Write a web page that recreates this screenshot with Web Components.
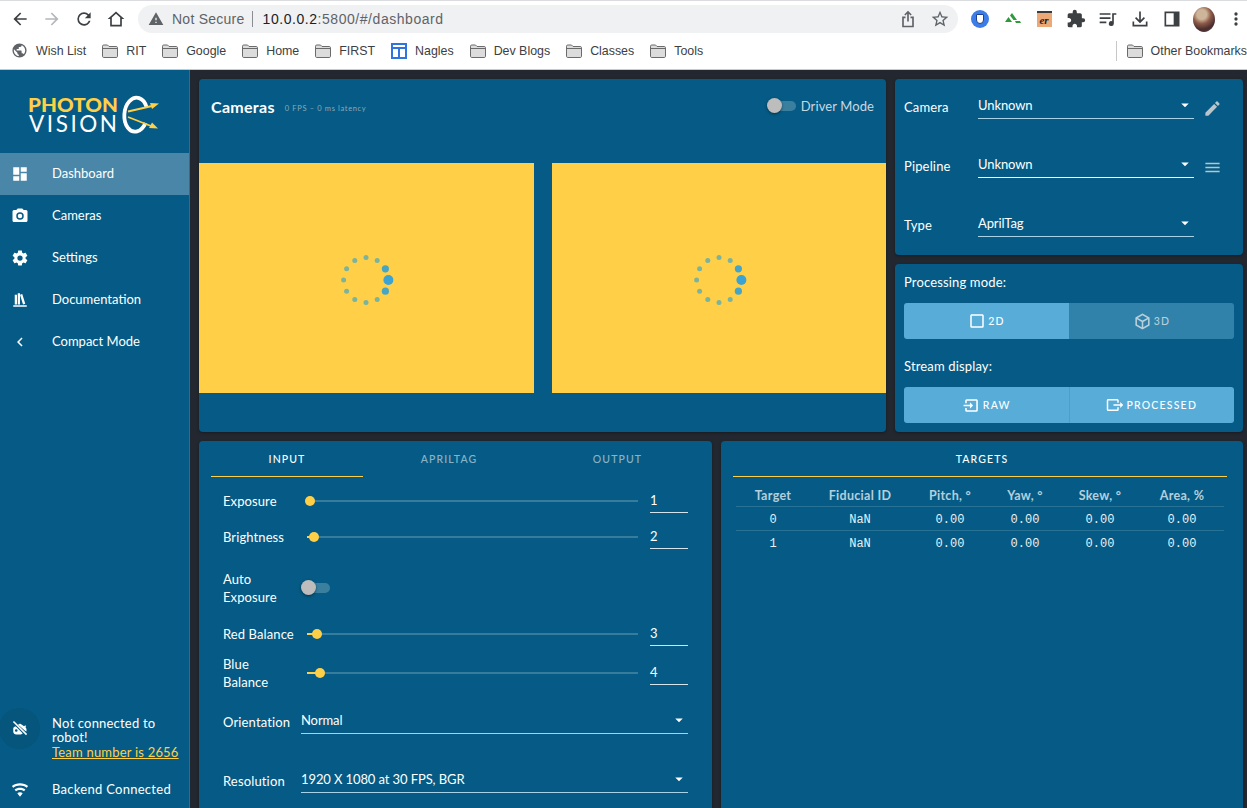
<!DOCTYPE html>
<html>
<head>
<meta charset="utf-8">
<title>Photon Vision</title>
<style>
  html, body { margin: 0; height: 100%; overflow: hidden; background: #232830; }
  body { font-family: Lato, "Noto Sans", sans-serif; color: #fff; display: flex; flex-direction: column; height: 808px; }
</style>
</head>
<body>
<pv-browser></pv-browser>
<pv-app>
  <pv-sidebar slot="side"></pv-sidebar>
  <pv-camera-card></pv-camera-card>
  <pv-picker-card></pv-picker-card>
  <pv-mode-card></pv-mode-card>
  <pv-input-card></pv-input-card>
  <pv-targets-card></pv-targets-card>
</pv-app>

<script>
const Colors = {
  card: '#055b85',
  page: '#232830',
  yellow: '#ffd047',
  active: '#58acd8',
  inactive: '#3182aa',
};
const Paths = {
  dashboard: 'M13,3V9H21V3M13,21H21V11H13M3,21H11V15H3M3,13H11V3H3V13Z',
  camera: 'M4,4H7L9,2H15L17,4H20A2,2 0 0,1 22,6V18A2,2 0 0,1 20,20H4A2,2 0 0,1 2,18V6A2,2 0 0,1 4,4M12,7A5,5 0 0,0 7,12A5,5 0 0,0 12,17A5,5 0 0,0 17,12A5,5 0 0,0 12,7M12,9A3,3 0 0,1 15,12A3,3 0 0,1 12,15A3,3 0 0,1 9,12A3,3 0 0,1 12,9Z',
  cog: 'M12,15.5A3.5,3.5 0 0,1 8.5,12A3.5,3.5 0 0,1 12,8.5A3.5,3.5 0 0,1 15.5,12A3.5,3.5 0 0,1 12,15.5M19.43,12.97C19.47,12.65 19.5,12.33 19.5,12C19.5,11.67 19.47,11.34 19.43,11L21.54,9.37C21.73,9.22 21.78,8.95 21.66,8.73L19.66,5.27C19.54,5.05 19.27,4.96 19.05,5.05L16.56,6.05C16.04,5.66 15.5,5.32 14.87,5.07L14.5,2.42C14.46,2.18 14.25,2 14,2H10C9.75,2 9.54,2.18 9.5,2.42L9.13,5.07C8.5,5.32 7.96,5.66 7.44,6.05L4.95,5.05C4.73,4.96 4.46,5.05 4.34,5.27L2.34,8.73C2.21,8.95 2.27,9.22 2.46,9.37L4.57,11C4.53,11.34 4.5,11.67 4.5,12C4.5,12.33 4.53,12.65 4.57,12.97L2.46,14.63C2.27,14.78 2.21,15.05 2.34,15.27L4.34,18.73C4.46,18.95 4.73,19.03 4.95,18.95L7.44,17.94C7.96,18.34 8.5,18.68 9.13,18.93L9.5,21.58C9.54,21.82 9.75,22 10,22H14C14.25,22 14.46,21.82 14.5,21.58L14.87,18.93C15.5,18.67 16.04,18.34 16.56,17.94L19.05,18.95C19.27,19.03 19.54,18.95 19.66,18.73L21.66,15.27C21.78,15.05 21.73,14.78 21.54,14.63L19.43,12.97Z',
  bookshelf: 'M9 3V18H12V3H9M12 5L16 18L19 17L15 4L12 5M5 5V18H8V5H5M3 19V21H21V19H3Z',
  chevron: 'M15.41,16.58L10.83,12L15.41,7.41L14,6L8,12L14,18L15.41,16.58Z',
  wifi: 'M12,21L15.6,16.2C14.6,15.45 13.35,15 12,15C10.65,15 9.4,15.45 8.4,16.2L12,21M12,3C7.95,3 4.21,4.34 1.2,6.6L3,9C5.5,7.12 8.62,6 12,6C15.38,6 18.5,7.12 21,9L22.8,6.6C19.79,4.34 16.05,3 12,3M12,9C9.3,9 6.81,9.89 4.8,11.4L6.6,13.8C8.1,12.67 9.97,12 12,12C14.03,12 15.9,12.67 17.4,13.8L19.2,11.4C17.19,9.89 14.7,9 12,9Z',
  robotoff: 'M4 2.500L21.500 20L20 21.500L2.500 4ZM3 13C3 11 4.500 9.500 6.500 10L15.500 19C15 19.800 14.300 20.500 13 20.500H7C4.800 20.500 3 19 3 16.500ZM7 13.500A1.800 1.800 0 1 0 7 17.100A1.800 1.800 0 1 0 7 13.500ZM9.500 7.500C10.500 6.300 12 6 13 6.500L17.500 9.500L19 8.200L20.300 9.500L19 10.800C20.500 12 21 14 20.500 16.500L18.800 15.800Z',
  pencil: 'M20.71,7.04C21.1,6.65 21.1,6 20.71,5.63L18.37,3.29C18,2.9 17.35,2.9 16.96,3.29L15.12,5.12L18.87,8.87M3,17.25V21H6.75L17.81,9.93L14.06,6.18L3,17.25Z',
  menu: 'M3,6H21V8H3V6M3,11H21V13H3V11M3,16H21V18H3V16Z',
  caret: 'M7,10L12,15L17,10H7Z',
  cube: 'M21,16.5C21,16.88 20.79,17.21 20.47,17.38L12.57,21.82C12.41,21.94 12.21,22 12,22C11.79,22 11.59,21.94 11.43,21.82L3.53,17.38C3.21,17.21 3,16.88 3,16.5V7.5C3,7.12 3.21,6.79 3.53,6.62L11.43,2.18C11.59,2.06 11.79,2 12,2C12.21,2 12.41,2.06 12.57,2.18L20.47,6.62C20.79,6.79 21,7.12 21,7.5V16.5M12,4.15L6.04,7.5L12,10.85L17.96,7.5L12,4.15M5,15.91L11,19.29V12.58L5,9.21V15.91M19,15.91V9.21L13,12.58V19.29L19,15.91Z',
  square: 'M19,3H5C3.89,3 3,3.89 3,5V19A2,2 0 0,0 5,21H19A2,2 0 0,0 21,19V5C21,3.89 20.1,3 19,3M19,5V19H5V5H19Z',
  import: 'M14,12L10,8V11H2V13H10V16M20,18V6C20,4.89 19.1,4 18,4H6A2,2 0 0,0 4,6V9H6V6H18V18H6V15H4V18A2,2 0 0,0 6,20H18A2,2 0 0,0 20,18Z',
  export: 'M23,12L19,8V11H10V13H19V16M1,18V6C1,4.89 1.9,4 3,4H15A2,2 0 0,1 17,6V9H15V6H3V18H15V15H17V18A2,2 0 0,1 15,20H3A2,2 0 0,1 1,18Z',
  back: 'M20,11V13H8L13.5,18.5L12.08,19.92L4.16,12L12.08,4.08L13.5,5.5L8,11H20Z',
  forward: 'M4,11V13H16L10.5,18.5L11.92,19.92L19.84,12L11.92,4.08L10.5,5.5L16,11H4Z',
  reload: 'M17.65,6.35C16.2,4.9 14.21,4 12,4A8,8 0 0,0 4,12A8,8 0 0,0 12,20C15.73,20 18.84,17.45 19.73,14H17.65C16.83,16.33 14.61,18 12,18A6,6 0 0,1 6,12A6,6 0 0,1 12,6C13.66,6 15.14,6.69 16.22,7.78L13,11H20V4L17.65,6.35Z',
  home: 'M12 3L2 12H5V21H19V12H22L12 3M12 5.8L17 10.3V19H7V10.3L12 5.8Z',
  alert: 'M13,14H11V10H13M13,18H11V16H13M1,21H23L12,2L1,21Z',
  star: 'M12,15.39L8.24,17.66L9.23,13.38L5.91,10.5L10.29,10.13L12,6.09L13.71,10.13L18.09,10.5L14.77,13.38L15.76,17.66M22,9.24L14.81,8.63L12,2L9.19,8.62L2,9.24L7.45,13.97L5.82,21L12,17.27L18.18,21L16.54,13.97L22,9.24Z',
  share: 'M12 2L7.5 6.5L8.9 7.9L11 5.8V15H13V5.8L15.1 7.9L16.5 6.5L12 2M5 9V22H19V9H15V11H17V20H7V11H9V9H5Z',
  puzzle: 'M20.5,11H19V7C19,5.89 18.1,5 17,5H13V3.5A2.5,2.5 0 0,0 10.5,1A2.5,2.5 0 0,0 8,3.5V5H4A2,2 0 0,0 2,7V10.8H3.5C5,10.8 6.2,12 6.2,13.5C6.2,15 5,16.2 3.5,16.2H2V20A2,2 0 0,0 4,22H7.8V20.5C7.8,19 9,17.8 10.5,17.8C12,17.8 13.2,19 13.2,20.5V22H17A2,2 0 0,0 19,20V16H20.5A2.5,2.5 0 0,0 23,13.5A2.5,2.5 0 0,0 20.5,11Z',
  queue: 'M2 5H15V7H2V5M2 10H15V12H2V10M2 15H10V17H2V15M17 5H22V7H19V17.5A3 3 0 1 1 17 14.7V5Z',
  download: 'M11 3H13V13.2L16.6 9.6L18 11L12 17L6 11L7.4 9.6L11 13.2V3M3 15H5V19H19V15H21V21H3V15Z',
  panel: 'M3 3H21V21H3V3M5 5V19H14V5H5Z',
  dots: 'M12,16A2,2 0 0,1 14,18A2,2 0 0,1 12,20A2,2 0 0,1 10,18A2,2 0 0,1 12,16M12,10A2,2 0 0,1 14,12A2,2 0 0,1 12,14A2,2 0 0,1 10,12A2,2 0 0,1 12,10M12,4A2,2 0 0,1 14,6A2,2 0 0,1 12,8A2,2 0 0,1 10,6A2,2 0 0,1 12,4Z',
  earth: 'M17.9,17.39C17.64,16.59 16.89,16 16,16H15V13A1,1 0 0,0 14,12H8V10H10A1,1 0 0,0 11,9V7H13A2,2 0 0,0 15,5V4.59C17.93,5.77 20,8.64 20,12C20,14.08 19.2,15.97 17.9,17.39M11,19.93C7.05,19.44 4,16.08 4,12C4,11.38 4.08,10.78 4.21,10.21L9,15V16A2,2 0 0,0 11,18M12,2A10,10 0 0,0 2,12A10,10 0 0,0 12,22A10,10 0 0,0 22,12A10,10 0 0,0 12,2Z',
};

class PvElement extends HTMLElement {
  constructor() {
    super();
    this.attachShadow({ mode: 'open' });
    this.shadowRoot.innerHTML = this.render();
  }
  render() { return ''; }
}

class PvIcon extends PvElement {
  render() {
    const size = this.getAttribute('size') || 24;
    const d = Paths[this.getAttribute('name')];
    return `<style>:host{display:inline-flex;flex:none;width:${size}px;height:${size}px;}svg{display:block;width:100%;height:100%;}</style>
      <svg viewBox="0 0 24 24"><path fill="currentColor" d="${d}"/></svg>`;
  }
}
customElements.define('pv-icon', PvIcon);

class PvFolder extends PvElement {
  render() {
    return `<style>:host{display:inline-flex;flex:none;width:16px;height:14px;}svg{display:block;}</style>
      <svg width="16" height="14" viewBox="0 0 16 14">
        <path d="M.5 2.2C.5 1.5 1 1 1.7 1H5.5L7 2.5H14.3C15 2.5 15.5 3 15.5 3.7V12.3C15.5 13 15 13.5 14.3 13.5H1.7C1 13.5 .5 13 .5 12.3Z" fill="#dcdcdc" stroke="#6b6b6b"/>
        <path d="M1 4.5H15" stroke="#6b6b6b"/>
      </svg>`;
  }
}
customElements.define('pv-folder', PvFolder);

class PvBookmark extends PvElement {
  render() {
    return `<style>
      :host{display:inline-flex;align-items:center;gap:8px;font:12.4px "Liberation Sans",sans-serif;color:#3c4043;white-space:nowrap;}
    </style><slot name="icon"><pv-folder></pv-folder></slot><slot></slot>`;
  }
}
customElements.define('pv-bookmark', PvBookmark);

class PvBrowser extends PvElement {
  render() {
    const tool = (name, color) => `<span class="tool" style="color:${color || '#5f6368'}"><pv-icon name="${name}" size="20"></pv-icon></span>`;
    return `<style>
      :host{display:block;flex:none;height:70px;background:#fff;box-sizing:border-box;border-top:1px solid #dadce0;border-bottom:1px solid #c9c9c9;overflow:hidden;font-family:"Liberation Sans",sans-serif;color:#202124;}
      .bar{display:flex;align-items:center;height:32px;padding:2px 0 0 4px;}
      .tool{display:flex;align-items:center;justify-content:center;flex:none;width:32px;height:28px;}
      .omni{flex:none;width:820px;height:28px;margin:0 6px;box-sizing:border-box;padding:0 8px 0 10px;border-radius:14px;background:#f0f1f3;display:flex;align-items:center;font-size:14px;}
      .warn{color:#5f6368;margin-right:8px;}
      .sec{color:#5f6368;letter-spacing:.25px;}
      .sep{width:1px;height:16px;background:#8a8d91;margin:0 10px 0 7px;}
      .url{letter-spacing:.55px;flex:1;}
      .url span{color:#5f6368;}
      .omni-right{display:flex;gap:12px;color:#5f6368;}
      .marks{display:flex;align-items:center;height:31px;padding-left:10px;gap:16px;}
      .globe{color:#5f6368;margin-left:1px;}
      .end{margin-left:auto;border-left:1px solid #c7c7c7;padding-left:10px;height:20px;display:flex;align-items:center;flex:none;}
      .shield{width:18px;height:18px;border-radius:50%;background:#3d7de8;display:flex;align-items:center;justify-content:center;}
      .shield i{width:6px;height:8px;background:#fff;border-radius:1px 1px 4px 4px;border:1.5px solid #1f3f90;display:block;}
      .er{width:15px;height:16px;background:#eda878;color:#222;font:italic bold 11px "Liberation Serif",serif;display:flex;align-items:center;justify-content:center;border-top:2px solid #3a3a3a;box-sizing:border-box;}
      .me{width:22px;height:25px;border-radius:50%;background:radial-gradient(circle at 40% 30%,#cdb59a 0 22%,#8d5a48 42%,#4a2c30 68%,#5d4a35);}
    </style>
    <div class="bar">
      ${tool('back', '#3c4043')}${tool('forward', '#b5b7ba')}${tool('reload', '#3c4043')}${tool('home', '#3c4043')}
      <div class="omni">
        <pv-icon class="warn" name="alert" size="16"></pv-icon>
        <span class="sec">Not Secure</span><i class="sep"></i>
        <span class="url">10.0.0.2<span>:5800/#/dashboard</span></span>
        <div class="omni-right"><pv-icon name="share" size="20"></pv-icon><pv-icon name="star" size="20"></pv-icon></div>
      </div>
      <span class="tool"><span class="shield"><i></i></span></span>
      <span class="tool" style="color:#2f9a3a"><svg width="18" height="14" viewBox="0 0 18 14"><path fill="currentColor" d="M9 1L14 8H10.5L7 3.5ZM5.5 5L9 10H2ZM12 9H17L18 11H13Z"/></svg></span>
      <span class="tool"><span class="er">er</span></span>
      ${tool('puzzle', '#3c4043')}${tool('queue', '#3c4043')}${tool('download', '#3c4043')}${tool('panel', '#3c4043')}
      <span class="tool"><span class="me"></span></span>
      ${tool('dots', '#3c4043')}
    </div>
    <div class="marks">
      <pv-bookmark><pv-icon class="globe" slot="icon" name="earth" size="17"></pv-icon>Wish List</pv-bookmark>
      <pv-bookmark>RIT</pv-bookmark>
      <pv-bookmark>Google</pv-bookmark>
      <pv-bookmark>Home</pv-bookmark>
      <pv-bookmark>FIRST</pv-bookmark>
      <pv-bookmark><svg slot="icon" width="16" height="16" viewBox="0 0 16 16"><path d="M1 1H15V15H1ZM1 5H15M8 5V15" fill="#fff" stroke="#2f74e0" stroke-width="2"/></svg>Nagles</pv-bookmark>
      <pv-bookmark>Dev Blogs</pv-bookmark>
      <pv-bookmark>Classes</pv-bookmark>
      <pv-bookmark>Tools</pv-bookmark>
      <div class="end"><pv-bookmark>Other Bookmarks</pv-bookmark></div>
    </div>`;
  }
}
customElements.define('pv-browser', PvBrowser);

class PvApp extends PvElement {
  render() {
    return `<style>
      :host{display:flex;flex:1;min-height:0;overflow:hidden;background:${Colors.page};}
      main{flex:1;min-width:0;padding:9px 4px 0 9px;display:grid;grid-template-columns:513px 174px 9px 348px;grid-template-rows:176px 168px 400px;gap:9px 0;}
      ::slotted(pv-camera-card){grid-column:1/3;grid-row:1/3;}
      ::slotted(pv-picker-card){grid-column:4;grid-row:1;}
      ::slotted(pv-mode-card){grid-column:4;grid-row:2;}
      ::slotted(pv-input-card){grid-column:1;grid-row:3;}
      ::slotted(pv-targets-card){grid-column:2/5;grid-row:3;margin-left:9px;}
    </style><slot name="side"></slot><main><slot></slot></main>`;
  }
}
customElements.define('pv-app', PvApp);

class PvNavItem extends PvElement {
  render() {
    return `<style>
      :host{display:flex;align-items:center;height:42px;font-size:13px;letter-spacing:var(--nav-spacing,0);color:#fff;}
      :host([active]){background:#4a86a8;}
      .ic{flex:none;width:38px;padding-left:1px;box-sizing:border-box;display:flex;justify-content:center;}
      .txt{margin-left:14px;padding-bottom:2px;}
    </style><span class="ic"><pv-icon name="${this.getAttribute('icon')}" size="18"></pv-icon></span><span class="txt"><slot></slot></span>`;
  }
}
customElements.define('pv-nav-item', PvNavItem);

class PvSidebar extends PvElement {
  render() {
    return `<style>
      :host{display:flex;flex-direction:column;flex:none;width:190px;box-sizing:border-box;background:${Colors.card};border-right:1px solid #2b6f92;}
      .logo{height:83px;flex:none;}
      .logo svg{display:block;}
      .grow{flex:1;}
      .robot{display:flex;align-items:flex-start;font-size:13px;letter-spacing:.2px;line-height:14.5px;padding-bottom:9px;}
      .avatar{flex:none;width:41px;height:41px;border-radius:50%;background:#05557c;display:flex;align-items:center;justify-content:center;margin:-8px 12px 0 -1px;}
      a{color:${Colors.yellow};text-decoration:underline;}
      .last{height:37px;padding-top:3px;--nav-spacing:.28px;}
    </style>
    <div class="logo">
      <svg width="189" height="83" viewBox="0 0 189 83">
        <text x="28" y="42" font-family="Lato,sans-serif" font-weight="900" font-size="19.5" fill="${Colors.yellow}" textLength="90" lengthAdjust="spacingAndGlyphs">PHOTON</text>
        <text x="29" y="62" font-family="Lato,sans-serif" font-weight="400" font-size="22.5" fill="#fff" textLength="88" lengthAdjust="spacing">VISION</text>
        <path d="M146.500 37A11.500 17 5 1 0 145.500 53" fill="none" stroke="#fff" stroke-width="3.8"/>
        <path d="M128 41.500L152 36" stroke="${Colors.yellow}" stroke-width="1.8"/>
        <path d="M159 33.500L150 33L152 39Z" fill="${Colors.yellow}"/>
        <path d="M128 47L151 56" stroke="${Colors.yellow}" stroke-width="1.8"/>
        <path d="M158 58.500L152 52.500L149 58Z" fill="${Colors.yellow}"/>
      </svg>
    </div>
    <pv-nav-item icon="dashboard" active>Dashboard</pv-nav-item>
    <pv-nav-item icon="camera">Cameras</pv-nav-item>
    <pv-nav-item icon="cog">Settings</pv-nav-item>
    <pv-nav-item icon="bookshelf">Documentation</pv-nav-item>
    <pv-nav-item icon="chevron">Compact Mode</pv-nav-item>
    <div class="grow"></div>
    <div class="robot">
      <span class="avatar"><pv-icon name="robotoff" size="18"></pv-icon></span>
      <span>Not connected to<br>robot!<br><a>Team number is 2656</a></span>
    </div>
    <pv-nav-item class="last" icon="wifi">Backend Connected</pv-nav-item>`;
  }
}
customElements.define('pv-sidebar', PvSidebar);

class PvCard extends PvElement {
  render() {
    return `<style>
      :host{display:block;background:${Colors.card};border-radius:4px;box-sizing:border-box;box-shadow:0 1px 3px rgba(0,0,0,.35);overflow:hidden;}
    </style><slot></slot>`;
  }
}
customElements.define('pv-card', PvCard);

class PvSwitch extends PvElement {
  render() {
    return `<style>
      :host{display:inline-block;position:relative;flex:none;width:29px;height:16px;}
      .track{position:absolute;left:1px;right:0;top:3px;height:10px;border-radius:5px;background:rgba(255,255,255,.22);}
      .thumb{position:absolute;left:0;top:0;width:15px;height:15px;border-radius:50%;background:#bdbdbd;box-shadow:0 1px 3px rgba(0,0,0,.45);}
    </style><div class="track"></div><div class="thumb"></div>`;
  }
}
customElements.define('pv-switch', PvSwitch);

class PvSpinner extends PvElement {
  render() {
    let dots = '';
    for (let i = 0; i < 12; i++) {
      const a = i * Math.PI / 6;
      const x = 30 + 22.4 * Math.cos(a);
      const y = 30 + 22.4 * Math.sin(a);
      const d = Math.min(i, 12 - i);
      const r = d === 0 ? 5 : d === 1 ? 3.6 : 2.5;
      const fill = d === 0 ? '#3ba2d4' : d === 1 ? '#46a5c4' : '#7bb39c';
      dots += `<circle cx="${x.toFixed(2)}" cy="${y.toFixed(2)}" r="${r}" fill="${fill}"/>`;
    }
    return `<style>:host{display:block;width:60px;height:60px;}svg{display:block;}</style><svg width="60" height="60">${dots}</svg>`;
  }
}
customElements.define('pv-spinner', PvSpinner);

class PvCameraCard extends PvElement {
  render() {
    return `<style>
      :host{display:block;}
      pv-card{height:100%;}
      header{display:flex;align-items:center;height:84px;box-sizing:border-box;padding:0 12px 29px;}
      h1{margin:0;font-size:16px;font-weight:700;letter-spacing:.3px;}
      small{font-size:7.5px;letter-spacing:.65px;color:#8ba9ba;margin-left:10px;margin-top:3px;}
      .drv{margin-left:auto;display:flex;align-items:center;gap:5px;font-size:13px;letter-spacing:.1px;color:#c8d8e2;padding-bottom:2px;}
      .feeds{display:flex;gap:18px;}
      .feed{flex:1;height:230px;box-sizing:border-box;padding-top:4px;background:${Colors.yellow};display:flex;align-items:center;justify-content:center;}
    </style>
    <pv-card>
      <header><h1>Cameras</h1><small>0 FPS – 0 ms latency</small><div class="drv"><pv-switch></pv-switch>Driver Mode</div></header>
      <div class="feeds"><div class="feed"><pv-spinner></pv-spinner></div><div class="feed"><pv-spinner></pv-spinner></div></div>
    </pv-card>`;
  }
}
customElements.define('pv-camera-card', PvCameraCard);

class PvField extends PvElement {
  render() {
    return `<style>
      :host{display:flex;align-items:center;height:24px;font-size:13px;letter-spacing:.15px;}
      .lab{flex:none;width:var(--label-width,78px);box-sizing:border-box;white-space:nowrap;}
      .ctl{flex:1;min-width:0;}
      ::slotted([slot=after]){flex:none;}
    </style><span class="lab"><slot name="label"></slot></span><div class="ctl"><slot></slot></div><slot name="after"></slot>`;
  }
}
customElements.define('pv-field', PvField);

class PvSelect extends PvElement {
  render() {
    return `<style>
      :host{display:block;height:24px;box-sizing:border-box;border-bottom:1px solid var(--line,#a9d2e6);position:relative;font-size:13px;letter-spacing:-.1px;line-height:20px;}
      pv-icon{position:absolute;right:0;top:1px;}
    </style><slot></slot><pv-icon name="caret" size="18"></pv-icon>`;
  }
}
customElements.define('pv-select', PvSelect);

class PvPickerCard extends PvElement {
  render() {
    return `<style>
      :host{display:block;}
      pv-card{height:100%;padding:16px 13px 0 9px;}
      pv-field{--label-width:74px;margin-bottom:35px;}
      .act{width:36px;display:flex;justify-content:center;color:#b9c5cc;padding-top:3px;}
    </style>
    <pv-card>
      <pv-field><span slot="label">Camera</span><pv-select>Unknown</pv-select><span class="act" slot="after"><pv-icon name="pencil" size="19"></pv-icon></span></pv-field>
      <pv-field><span slot="label">Pipeline</span><pv-select style="--line:#fff">Unknown</pv-select><span class="act" slot="after"><pv-icon name="menu" size="19"></pv-icon></span></pv-field>
      <pv-field><span slot="label">Type</span><pv-select>AprilTag</pv-select><span class="act" slot="after"></span></pv-field>
    </pv-card>`;
  }
}
customElements.define('pv-picker-card', PvPickerCard);

class PvToggle extends PvElement {
  render() {
    return `<style>
      :host{display:flex;height:36px;border-radius:3px;overflow:hidden;}
      ::slotted(pv-toggle-btn){flex:1;}
    </style><slot></slot>`;
  }
}
customElements.define('pv-toggle', PvToggle);

class PvToggleBtn extends PvElement {
  render() {
    return `<style>
      :host{display:flex;align-items:center;justify-content:center;gap:2px;background:${Colors.inactive};color:#b9cfdb;font-size:10.5px;font-weight:500;letter-spacing:1.2px;}
      :host([active]){background:${Colors.active};color:#fff;}
      :host([divider]){border-right:1px solid #4b9fcb;}
    </style><pv-icon name="${this.getAttribute('icon')}" size="${this.getAttribute('size') || 18}"></pv-icon><slot></slot>`;
  }
}
customElements.define('pv-toggle-btn', PvToggleBtn);

class PvModeCard extends PvElement {
  render() {
    return `<style>
      :host{display:block;}
      pv-card{height:100%;padding:9px 9px 0;font-size:13px;letter-spacing:.15px;line-height:18px;}
      p{margin:0 0 12px;}
      pv-toggle{margin-bottom:18px;}
    </style>
    <pv-card>
      <p>Processing mode:</p>
      <pv-toggle><pv-toggle-btn icon="square" active>2D</pv-toggle-btn><pv-toggle-btn icon="cube" size="19">3D</pv-toggle-btn></pv-toggle>
      <p>Stream display:</p>
      <pv-toggle><pv-toggle-btn icon="import" size="19" active divider>RAW</pv-toggle-btn><pv-toggle-btn icon="export" active>PROCESSED</pv-toggle-btn></pv-toggle>
    </pv-card>`;
  }
}
customElements.define('pv-mode-card', PvModeCard);

class PvSlider extends PvElement {
  render() {
    const pos = this.getAttribute('pos');
    return `<style>
      :host{display:flex;align-items:center;height:36px;font-size:13px;letter-spacing:.1px;line-height:18px;}
      .lab{flex:none;width:84px;white-space:nowrap;}
      .track{flex:1;height:2px;background:rgba(255,255,255,.2);position:relative;}
      .fill{position:absolute;left:0;top:0;height:2px;width:${pos}px;background:${Colors.yellow};}
      .thumb{position:absolute;left:${pos - 5}px;top:-4px;width:10px;height:10px;border-radius:50%;background:${Colors.yellow};}
      .val{flex:none;width:38px;margin-left:12px;height:24px;box-sizing:border-box;border-bottom:1px solid #d5e3ea;line-height:22px;}
    </style>
    <span class="lab"><slot></slot></span>
    <div class="track"><div class="fill"></div><div class="thumb"></div></div>
    <div class="val">${this.getAttribute('value')}</div>`;
  }
}
customElements.define('pv-slider', PvSlider);

class PvTabs extends PvElement {
  render() {
    return `<style>
      :host{display:flex;height:36px;box-sizing:border-box;font-size:10.5px;font-weight:500;letter-spacing:1.1px;}
      ::slotted(*){display:flex;align-items:center;justify-content:center;box-sizing:border-box;color:rgba(255,255,255,.55);}
      ::slotted([active]){color:#fff;border-bottom:1px solid ${Colors.yellow};}
    </style><slot></slot>`;
  }
}
customElements.define('pv-tabs', PvTabs);

class PvInputCard extends PvElement {
  render() {
    return `<style>
      :host{display:block;}
      pv-card{height:100%;padding:0 24px 0 12px;}
      pv-tabs{margin-right:-12px;}
      .form{padding:6px 0 0 12px;}
      .auto{display:flex;align-items:center;height:36px;margin-top:15px;font-size:13px;letter-spacing:.1px;line-height:18px;}
      .auto span{width:78px;flex:none;}
      pv-field{--label-width:78px;}
    </style>
    <pv-card>
      <pv-tabs><span active style="width:152px">INPUT</span><span style="width:172px">APRILTAG</span><span style="width:165px">OUTPUT</span></pv-tabs>
      <div class="form">
        <pv-slider pos="3" value="1">Exposure</pv-slider>
        <pv-slider pos="7" value="2">Brightness</pv-slider>
        <div class="auto"><span>Auto<br>Exposure</span><pv-switch></pv-switch></div>
        <pv-slider pos="10" value="3" style="margin-top:10px">Red Balance</pv-slider>
        <pv-slider pos="13" value="4" style="margin-top:3px">Blue<br>Balance</pv-slider>
        <pv-field style="margin-top:19px"><span slot="label">Orientation</span><pv-select>Normal</pv-select></pv-field>
        <pv-field style="margin-top:35px"><span slot="label">Resolution</span><pv-select>1920 X 1080 at 30 FPS, BGR</pv-select></pv-field>
      </div>
    </pv-card>`;
  }
}
customElements.define('pv-input-card', PvInputCard);

class PvTargetsCard extends PvElement {
  render() {
    const row = (t) => `<tr><td>${t}</td><td>NaN</td><td>0.00</td><td>0.00</td><td>0.00</td><td>0.00</td></tr>`;
    return `<style>
      :host{display:block;}
      pv-card{height:100%;padding:0 16px 0 12px;}
      .tab{height:36px;box-sizing:border-box;border-bottom:1px solid ${Colors.yellow};display:flex;align-items:center;justify-content:center;padding-left:4px;font-size:10.5px;font-weight:500;letter-spacing:1.1px;}
      table{border-collapse:collapse;table-layout:fixed;width:488px;margin:0 0 0 3px;}
      th{height:29px;padding:0 0 3px;vertical-align:bottom;box-sizing:border-box;font-size:12.5px;font-weight:700;color:#b4cfdd;letter-spacing:.3px;}
      td{height:24px;padding:3px 0 0;box-sizing:border-box;text-align:center;font:12px "Liberation Mono",monospace;color:#e8f0f4;}
      tr{border-bottom:1px solid rgba(255,255,255,.14);}
      tbody tr:last-child{border-bottom:none;}
    </style>
    <pv-card>
      <div class="tab">TARGETS</div>
      <table>
        <colgroup><col style="width:74px"><col style="width:100px"><col style="width:80px"><col style="width:70px"><col style="width:80px"><col style="width:84px"></colgroup>
        <thead><tr><th>Target</th><th>Fiducial ID</th><th>Pitch, °</th><th>Yaw, °</th><th>Skew, °</th><th>Area, %</th></tr></thead>
        <tbody>${row(0)}${row(1)}</tbody>
      </table>
    </pv-card>`;
  }
}
customElements.define('pv-targets-card', PvTargetsCard);
</script>
</body>
</html>
